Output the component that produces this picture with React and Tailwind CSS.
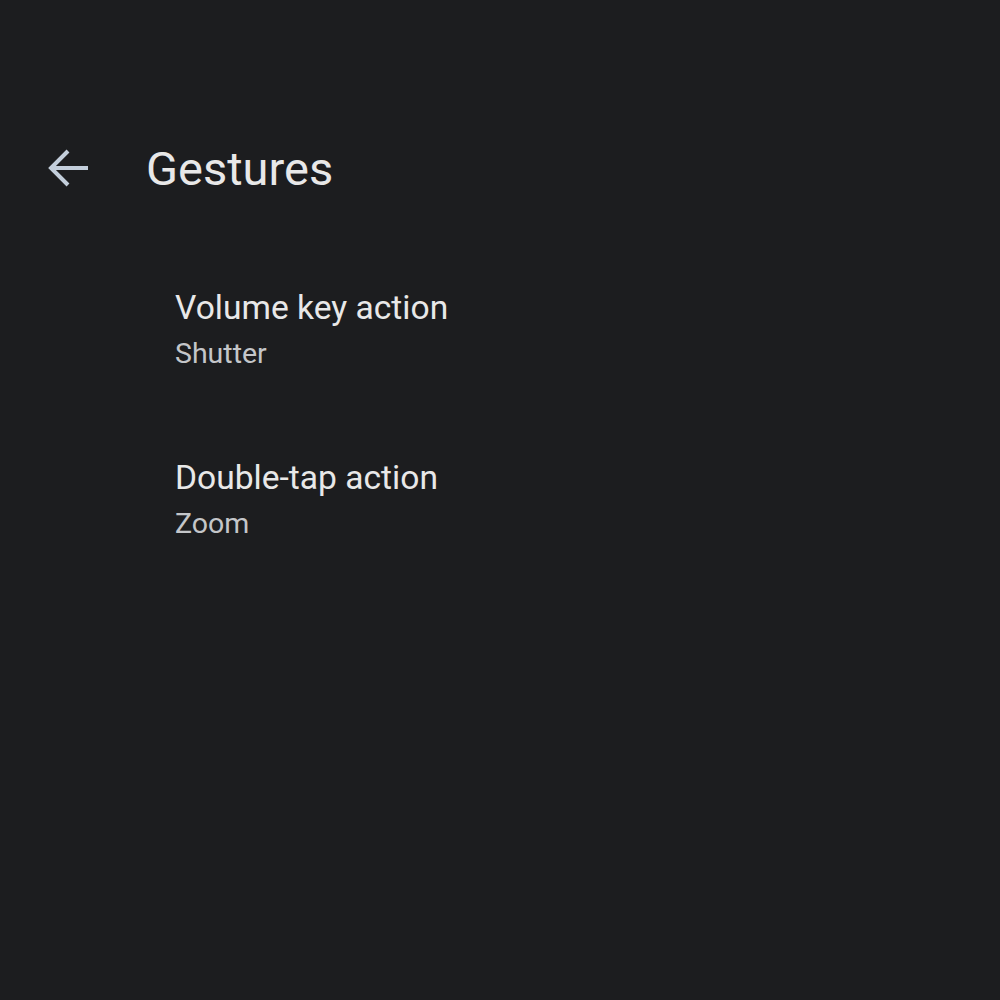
export default function App() {
  return (
    <div className="w-[1000px] h-[1000px] bg-[#1c1d1f] overflow-hidden" style={{ fontFamily: "Roboto, 'Open Sans', sans-serif" }}>
      <div className="flex items-center h-[80px] mt-[128px]">
        <div className="w-[146px] flex pl-[48px]">
          <svg width="42" height="40" viewBox="0 0 42 40" fill="none" stroke="#c3cedb" strokeWidth="4" strokeLinecap="butt">
            <path d="M40 20H5" />
            <path d="M20 3L3 20L20 37" />
          </svg>
        </div>
        <div className="text-[47px] text-[#e8e8e8] leading-none">Gestures</div>
      </div>
      <div className="pl-[175px] mt-[80px] flex flex-col gap-[87px]">
        <div className="flex flex-col">
          <div className="text-[33.6px] leading-[40px] text-[#e8e8e8]">Volume key action</div>
          <div className="text-[28.5px] leading-[34px] text-[#c4c6c9] mt-[9px]">Shutter</div>
        </div>
        <div className="flex flex-col">
          <div className="text-[33.6px] leading-[40px] text-[#e8e8e8]">Double-tap action</div>
          <div className="text-[28.5px] leading-[34px] text-[#c4c6c9] mt-[9px]">Zoom</div>
        </div>
      </div>
    </div>
  );
}
